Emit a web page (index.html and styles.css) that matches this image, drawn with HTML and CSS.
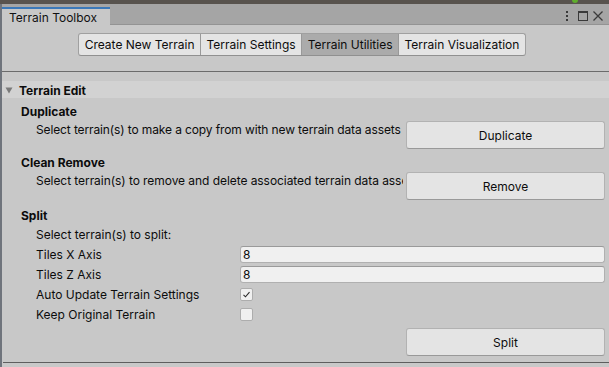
FILE: index.html
```html
<!DOCTYPE html>
<html>
<head>
<meta charset="utf-8">
<link rel="stylesheet" href="styles.css">
</head>
<body>
<div class="desktop">
  <div class="topstrip"><span class="blob"></span></div>
  <div class="window">
    <div class="tabbar">
      <div class="tab">Terrain Toolbox</div>
      <div class="wincontrols">
        <svg width="40" height="14" viewBox="0 0 40 14">
          <rect x="1" y="1" width="2" height="2" fill="#3a3a3a"/>
          <rect x="1" y="5" width="2" height="2" fill="#3a3a3a"/>
          <rect x="1" y="9" width="2" height="2" fill="#3a3a3a"/>
          <rect x="13.5" y="1.5" width="9" height="9" fill="none" stroke="#3a3a3a" stroke-width="1"/>
          <rect x="13" y="1" width="10" height="2" fill="#3a3a3a"/>
          <path d="M28.5 1.5 L37.5 10.5 M37.5 1.5 L28.5 10.5" stroke="#3a3a3a" stroke-width="1.3" fill="none"/>
        </svg>
      </div>
    </div>
    <div class="content">
      <div class="toolbar-wrap">
        <div class="toolbar">
          <div class="seg">Create New Terrain</div>
          <div class="seg">Terrain Settings</div>
          <div class="seg active">Terrain Utilities</div>
          <div class="seg">Terrain Visualization</div>
        </div>
      </div>
      <div class="sep"></div>
      <div class="foldout">
        <svg class="tri" width="8" height="7" viewBox="0 0 8 7"><path d="M0.5 0.5 L7.5 0.5 L4 6.5 Z" fill="#7a7a7a"/></svg>
        <span>Terrain Edit</span>
      </div>

      <div class="title t1">Duplicate</div>
      <div class="row">
        <div class="desc tight">Select terrain(s) to make a copy from with new terrain data assets</div>
        <div class="btn">Duplicate</div>
      </div>

      <div class="title">Clean Remove</div>
      <div class="row">
        <div class="desc">Select terrain(s) to remove and delete associated terrain data assets</div>
        <div class="btn">Remove</div>
      </div>

      <div class="title t3">Split</div>
      <div class="line"><span class="label">Select terrain(s) to split:</span></div>
      <div class="line"><span class="label">Tiles X Axis</span><div class="field">8</div></div>
      <div class="line"><span class="label">Tiles Z Axis</span><div class="field">8</div></div>
      <div class="line"><span class="label">Auto Update Terrain Settings</span>
        <div class="check"><svg width="11" height="11" viewBox="0 0 11 11"><path d="M2.5 5.8 L4.5 7.8 L8.5 3.2" stroke="#2a2a2a" stroke-width="1.1" fill="none"/></svg></div>
      </div>
      <div class="line"><span class="label">Keep Original Terrain</span><div class="check"></div></div>
      <div class="splitrow"><div class="btn">Split</div></div>
      <div class="bottomline"></div>
    </div>
  </div>
</div>
</body>
</html>
```

FILE: styles.css
```css
html, body {
  margin: 0;
  padding: 0;
}
body {
  width: 609px;
  height: 367px;
  overflow: hidden;
  font-family: Inter, "Liberation Sans", sans-serif;
  font-size: 12px;
  color: #0c0c0c;
  background: #5a5650;
}
.desktop {
  width: 609px;
  height: 367px;
  display: flex;
  flex-direction: column;
}
.topstrip {
  height: 4px;
  background: #58534e;
  position: relative;
}
.blob {
  position: absolute;
  left: 572px;
  top: 0;
  width: 6px;
  height: 3px;
  background: #5fae2c;
  border-radius: 0 0 3px 3px;
}
.window {
  flex: 1;
  display: flex;
  flex-direction: column;
  border-left: 2px solid #6f747c;
  background: #c8c8c8;
}
.tabbar {
  height: 20px;
  background: #a5a5a5;
  border-bottom: 1px solid #939393;
  display: flex;
  align-items: flex-end;
  justify-content: space-between;
}
.tab {
  width: 108px;
  height: 18px;
  margin-bottom: -1px;
  box-sizing: border-box;
  border-top: 2px solid #3b78b8;
  background: #c8c8c8;
  padding-left: 7px;
  line-height: 17px;
  font-size: 12px;
  color: #111;
}
.wincontrols {
  align-self: center;
  margin-right: 4px;
  margin-top: 6px;
  height: 14px;
}
.content {
  flex: 1;
  display: flex;
  flex-direction: column;
}
.toolbar-wrap {
  display: flex;
  justify-content: center;
  margin-top: 8px;
  padding-right: 7px;
}
.toolbar {
  display: flex;
  height: 23px;
  box-sizing: border-box;
  border: 1px solid #a0a0a0;
  border-bottom-color: #909090;
  border-radius: 3px;
  background: #e4e4e4;
  overflow: hidden;
}
.seg {
  padding: 0 5.5px;
  line-height: 21px;
  border-left: 1px solid #999;
  white-space: nowrap;
}
.seg:first-child {
  border-left: none;
}
.seg.active {
  background: #ababab;
}
.sep {
  height: 1px;
  background: #6b6b6b;
  margin-top: 15px;
}
.foldout {
  margin-top: 9px;
  height: 17px;
  box-sizing: border-box;
  padding-top: 1px;
  background: #d2d2d2;
  display: flex;
  align-items: center;
  font-weight: bold;
}
.tri {
  margin-left: 3px;
  margin-right: 6px;
}
.title {
  height: 20px;
  line-height: 23px;
  padding-left: 19px;
  font-weight: bold;
}
.t1 {
  margin-top: 2px;
}
.t3 {
  margin-top: 2px;
}
.row {
  display: flex;
  align-items: flex-start;
  height: 31px;
  padding-right: 4px;
}
.desc {
  flex: 1;
  min-width: 0;
  padding-left: 34px;
  margin-right: 3px;
  line-height: 20px;
  white-space: nowrap;
  overflow: hidden;
  letter-spacing: -0.06px;
}
.desc.tight {
  letter-spacing: -0.12px;
}
.btn {
  width: 199px;
  height: 28px;
  box-sizing: border-box;
  margin-top: 1px;
  background: #e4e4e4;
  border: 1px solid #b2b2b2;
  border-bottom-color: #999;
  border-radius: 3px;
  display: flex;
  align-items: center;
  justify-content: center;
  flex-shrink: 0;
}
.line {
  height: 20px;
  display: flex;
  align-items: center;
  padding-right: 4px;
}
.label {
  width: 204px;
  padding-left: 34px;
  flex-shrink: 0;
  white-space: nowrap;
}
.field {
  flex: 1;
  height: 17px;
  box-sizing: border-box;
  background: #f0f0f0;
  border: 1px solid #b0b0b0;
  border-top-color: #9a9a9a;
  border-radius: 3px;
  padding-left: 2px;
  line-height: 15px;
}
.check {
  width: 13px;
  height: 13px;
  box-sizing: border-box;
  background: #f0f0f0;
  border: 1px solid #adadad;
  border-radius: 2px;
  display: flex;
  align-items: center;
  justify-content: center;
}
.splitrow {
  display: flex;
  justify-content: flex-end;
  padding-right: 4px;
  margin-top: 3px;
}
.bottomline {
  height: 1px;
  background: #5e5e5e;
  margin-top: 6px;
  margin-left: 1px;
}
```
